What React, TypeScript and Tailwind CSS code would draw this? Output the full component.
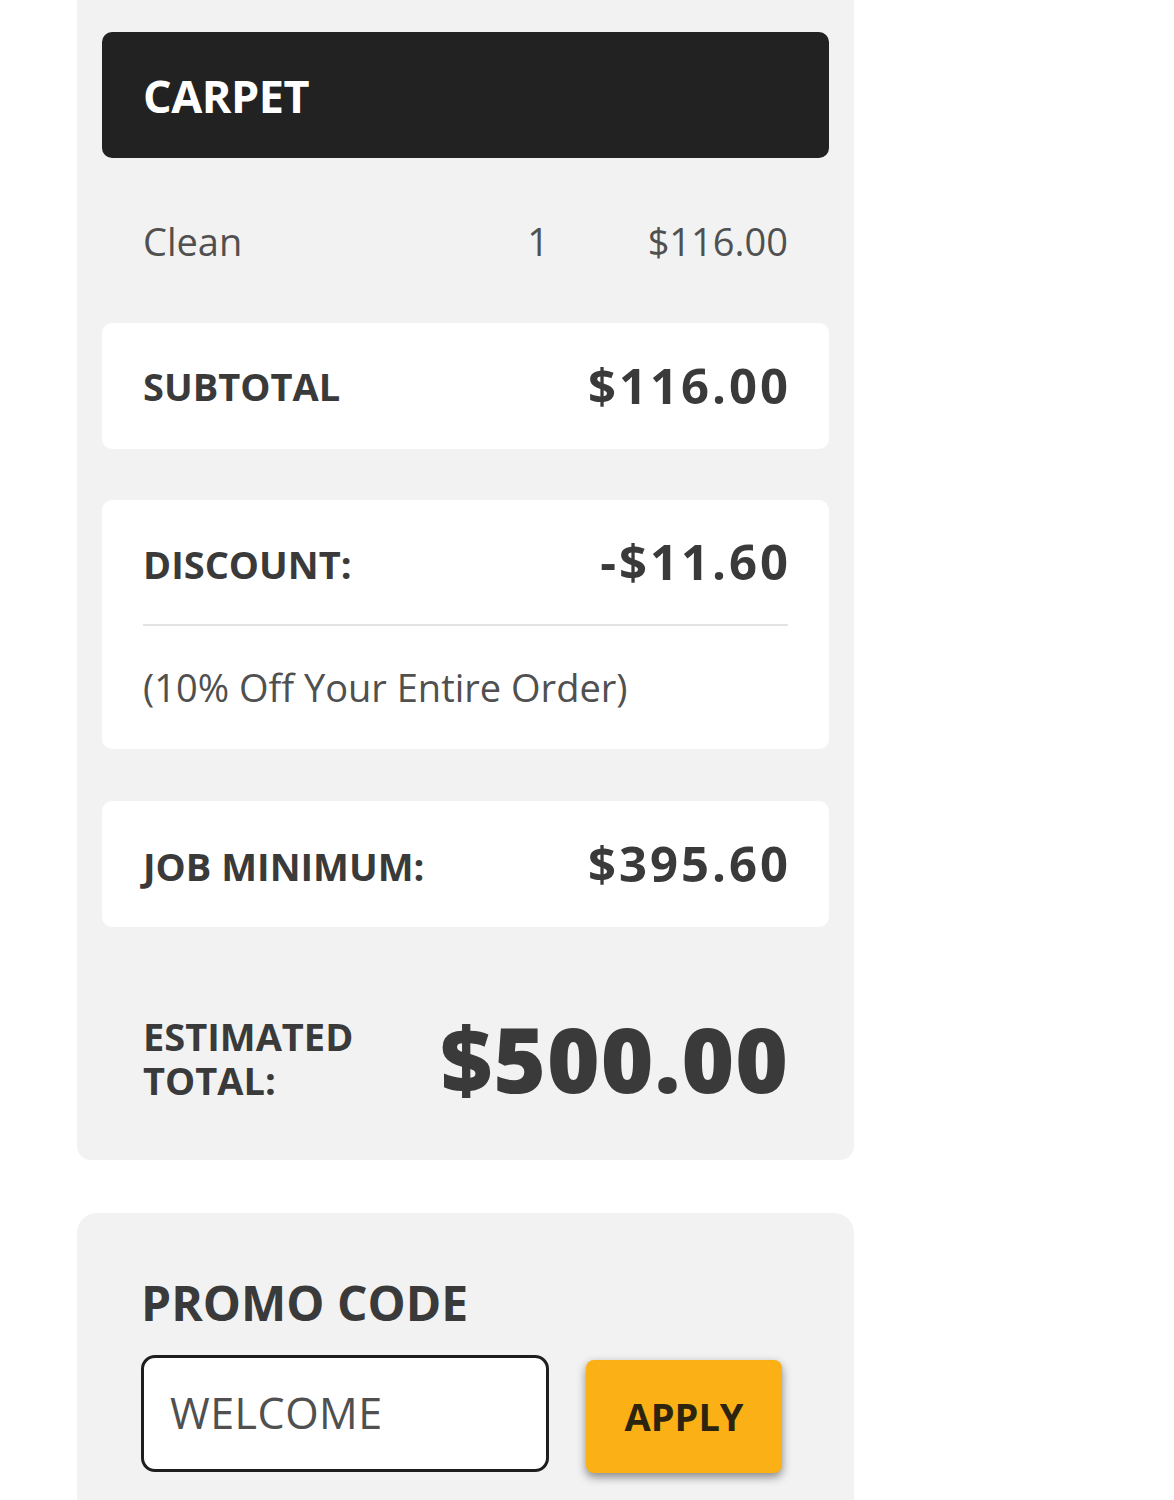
import React from "react";

export default function App() {
  const font = { fontFamily: '"Open Sans", "Liberation Sans", sans-serif' };
  return (
    <div className="min-h-[1500px] bg-white" style={font}>
      <div className="ml-[77px] w-[777px]">
        {/* Order summary panel */}
        <div className="rounded-b-[14px] bg-[#f2f2f2] px-[25px] pt-[32px]">
          <div className="flex h-[126px] items-center rounded-[10px] bg-[#222222] px-[41px]">
            <span className="text-[45px] font-bold leading-none tracking-[-0.5px] text-white">CARPET</span>
          </div>

          <div className="flex h-[165px] items-center px-[41px] pt-[2px] text-[38px] text-[#505050]">
            <span className="flex-1">Clean</span>
            <span className="mr-[39px]">1</span>
            <span className="w-[200px] text-right">$116.00</span>
          </div>

          <div className="flex h-[126px] items-center justify-between rounded-[10px] bg-white px-[41px] text-[#3a3a3a]">
            <span className="text-[38px] font-bold">SUBTOTAL</span>
            <span className="text-[49px] font-bold tracking-[3px] -mr-[3px]">$116.00</span>
          </div>

          <div className="mt-[51px] rounded-[10px] bg-white px-[41px] text-[#3a3a3a]">
            <div className="flex h-[126px] items-center justify-between border-b-2 border-[#e3e3e3]">
              <span className="mt-[4px] text-[38px] font-bold">DISCOUNT:</span>
              <span className="text-[49px] font-bold tracking-[3px] -mr-[3px]">-$11.60</span>
            </div>
            <div className="flex h-[123px] items-center text-[38px] text-[#505050]">
              (10% Off Your Entire Order)
            </div>
          </div>

          <div className="mt-[52px] flex h-[126px] items-center justify-between rounded-[10px] bg-white px-[41px] text-[#3a3a3a]">
            <span className="mt-[4px] text-[38px] font-bold">JOB MINIMUM:</span>
            <span className="text-[49px] font-bold tracking-[3px] -mr-[3px]">$395.60</span>
          </div>

          <div className="flex h-[233px] items-center justify-between px-[41px] pt-[29px] text-[#3a3a3a]">
            <span className="text-[38px] font-bold leading-[44px]">
              ESTIMATED
              <br />
              TOTAL:
            </span>
            <span className="text-[90px] font-extrabold leading-none tracking-[1px] -mr-[1px]">$500.00</span>
          </div>
        </div>

        {/* Promo code panel */}
        <div className="mt-[53px] rounded-t-[20px] bg-[#f2f2f2] pl-[64px] pr-[72px] pt-[62px] pb-[40px]">
          <div className="text-[48px] font-bold leading-[56px] text-[#3a3a3a]">PROMO CODE</div>
          <div className="mt-[24px] flex items-start">
            <div className="flex h-[117px] w-[408px] items-center rounded-[14px] border-[3px] border-[#1e1e1e] bg-white px-[26px] text-[43px] tracking-[0.5px] text-[#505050]">
              WELCOME
            </div>
            <button className="ml-[37px] mt-[5px] flex h-[113px] w-[196px] items-center justify-center rounded-[8px] bg-[#fbb016] text-[38px] font-bold text-[#2d2410] shadow-[0_4px_10px_rgba(0,0,0,0.45)]">
              APPLY
            </button>
          </div>
        </div>
      </div>
    </div>
  );
}
